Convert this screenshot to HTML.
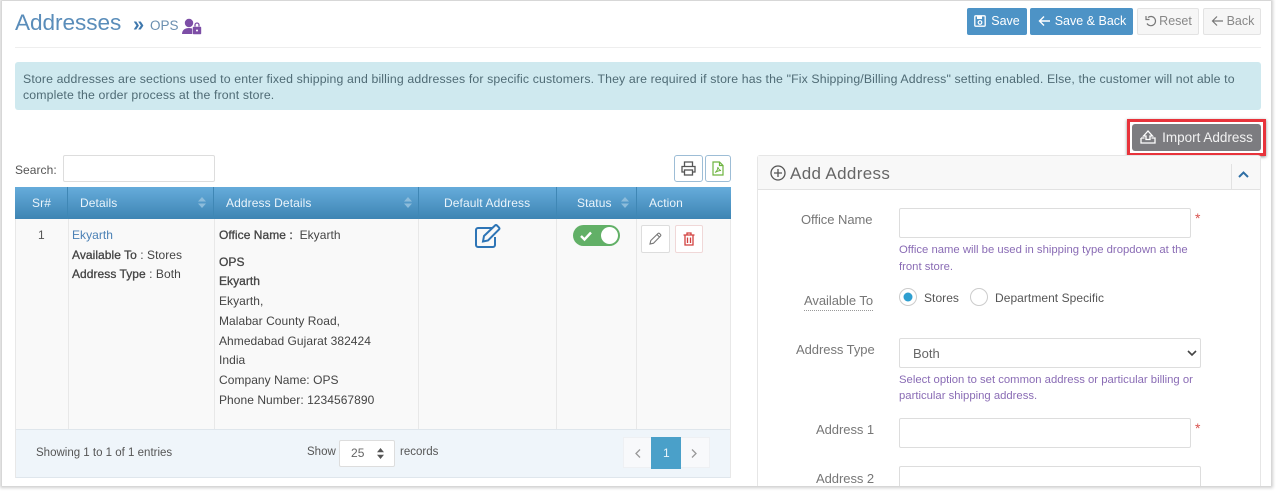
<!DOCTYPE html>
<html><head><meta charset="utf-8">
<style>
html,body{margin:0;padding:0;width:1280px;height:495px;overflow:hidden;background:#fff}
body{font-family:"Liberation Sans",sans-serif;font-size:12px;color:#555;position:relative;letter-spacing:.05px}
.a,.t{position:absolute}
.t{white-space:nowrap;line-height:16px}
.b{position:absolute;box-sizing:border-box;border-radius:2px;text-align:center;white-space:nowrap}
.in{position:absolute;box-sizing:border-box;background:#fff;border:1px solid #ddd;border-radius:2px}
.lab{position:absolute;white-space:nowrap;line-height:16px;color:#777;text-align:right;font-size:13px;letter-spacing:-.05px}
.help{position:absolute;white-space:nowrap;line-height:16px;color:#8a6cb5;font-size:11.3px;letter-spacing:0}
.v{position:absolute;top:219px;height:210px;width:1px;background:#e8e8e8}
.hv{position:absolute;top:187px;height:32px;width:1px;background:#3f87b5}
.h{position:absolute;top:195px;line-height:16px;color:#eaf4fb;white-space:nowrap;font-size:12px;letter-spacing:.1px}
svg{position:absolute;overflow:visible}
</style></head>
<body>
<div class="a" style="left:2px;top:1px;width:1269px;height:485px;background:#fff;box-shadow:0 0 3px 2px #cfcfcf"></div>

<div class="t" style="left:15px;top:7px;font-size:22.600px;line-height:32px;color:#5a8dba;letter-spacing:-.05px">Addresses</div>
<div class="t" style="left:133px;top:15px;font-size:20px;line-height:20px;color:#3f78ad;font-weight:bold;letter-spacing:0">»</div>
<div class="t" style="left:150px;top:17px;font-size:13.500px;line-height:18px;color:#6b8fb0;letter-spacing:0">OPS</div>
<svg style="left:182px;top:18px" width="20" height="17" viewBox="0 0 20 17"><circle cx="7" cy="5" r="4.200" fill="#7d4ea6"/><path d="M0 16c0-4 3-6 7-6 2 0 3 .4 4 1v5z" fill="#7d4ea6"/><rect x="10.500" y="8.500" width="9" height="8" rx="1" fill="#7d4ea6" stroke="#fff" stroke-width=".6"/><path d="M13 8.500V7a2 2 0 0 1 4 0v1.500" fill="none" stroke="#7d4ea6" stroke-width="1.300"/><circle cx="15" cy="12.500" r="1" fill="#fff"/></svg>
<div class="a" style="left:15px;top:47px;width:1246px;height:1px;background:#eee"></div>

<div class="b" style="left:967px;top:8px;width:60px;height:27px;background:#4d93c6;color:#fff;line-height:27px;padding-left:17px;font-size:12.500px;letter-spacing:0">Save</div>
<svg style="left:974px;top:15px" width="12" height="12" viewBox="0 0 12 12"><rect x=".8" y=".8" width="10.400" height="10.400" rx="1" fill="none" stroke="#fff" stroke-width="1.300"/><rect x="3" y="1" width="5" height="3" fill="#fff"/><circle cx="6" cy="7.500" r="1.800" fill="none" stroke="#fff" stroke-width="1.200"/></svg>
<div class="b" style="left:1030px;top:8px;width:103px;height:27px;background:#4d93c6;color:#fff;line-height:27px;padding-left:18px;font-size:12.500px;letter-spacing:0">Save &amp; Back</div>
<svg style="left:1038px;top:15px" width="13" height="12" viewBox="0 0 13 12"><path d="M12 6H1.500M6 1.500 1.500 6 6 10.500" fill="none" stroke="#fff" stroke-width="1.400"/></svg>
<div class="b" style="left:1137px;top:8px;width:62px;height:27px;background:#f6f6f6;border:1px solid #e3e3e3;color:#888;line-height:25px;padding-left:15px;font-size:12.500px;letter-spacing:0">Reset</div>
<svg style="left:1145px;top:15px" width="12" height="12" viewBox="0 0 12 12"><path d="M3 2.500A4.600 4.600 0 1 1 2 8.500" fill="none" stroke="#777" stroke-width="1.200"/><path d="M1 1v3.500h3.500" fill="none" stroke="#777" stroke-width="1.200"/></svg>
<div class="b" style="left:1203px;top:8px;width:58px;height:27px;background:#f6f6f6;border:1px solid #e3e3e3;color:#888;line-height:25px;padding-left:17px;font-size:12.500px;letter-spacing:0">Back</div>
<svg style="left:1211px;top:15px" width="13" height="12" viewBox="0 0 13 12"><path d="M12 6H1.500M6 1.500 1.500 6 6 10.500" fill="none" stroke="#777" stroke-width="1.200"/></svg>

<div class="a" style="left:15px;top:62px;width:1246px;height:48px;background:#cfe9ef;border-radius:3px"></div>
<div class="t" style="left:23px;top:71px;color:#4f6b75;font-size:12.300px;letter-spacing:.13px">Store addresses are sections used to enter fixed shipping and billing addresses for specific customers. They are required if store has the "Fix Shipping/Billing Address" setting enabled. Else, the customer will not able to</div>
<div class="t" style="left:23px;top:87px;color:#4f6b75;font-size:12.300px;letter-spacing:.13px">complete the order process at the front store.</div>

<div class="a" style="left:1127px;top:119px;width:139px;height:37px;box-sizing:border-box;border:3px solid #e8333b;box-shadow:0 1px 3px rgba(0,0,0,.45);background:#fff"></div>
<div class="b" style="left:1132px;top:124px;width:129px;height:27px;background:#7c7c80;border-radius:3px;color:#f2f2f2;line-height:27px;padding-left:22px;font-size:13.500px;letter-spacing:0">Import Address</div>
<svg style="left:1140px;top:130px" width="16" height="14" viewBox="0 0 16 14"><path d="M1 8v5h14V8h-3.500M4.500 8H1" fill="none" stroke="#fff" stroke-width="1.300"/><path d="M8 1 3.500 6H6v3.500h4V6h2.500z" fill="none" stroke="#fff" stroke-width="1.300"/></svg>

<div class="t" style="left:15px;top:162px">Search:</div>
<div class="in" style="left:63px;top:155px;width:152px;height:27px"></div>
<div class="in" style="left:674px;top:155px;width:29px;height:27px;border-color:#9dbdd6;border-radius:3px"></div>
<svg style="left:681px;top:161px" width="15" height="15" viewBox="0 0 15 15"><path d="M3.500 5V1h8v4M3.500 11H1V5.500h13V11h-2.500" fill="none" stroke="#555" stroke-width="1.300"/><rect x="3.500" y="9" width="8" height="5" fill="none" stroke="#555" stroke-width="1.300"/></svg>
<div class="in" style="left:705px;top:155px;width:26px;height:27px;border-color:#9dbdd6;border-radius:3px"></div>
<svg style="left:712px;top:161px" width="12" height="15" viewBox="0 0 12 15"><path d="M1 1h6.500L11 4.500V14H1zM7.500 1v3.500H11" fill="none" stroke="#6db33f" stroke-width="1.200"/><path d="M3 11.500c2-1 3-4 2.800-5.500.6 2 1.500 3 3.200 3.500-2 0-4 .8-6 2z" fill="none" stroke="#6db33f" stroke-width=".9"/></svg>

<!-- table -->
<div class="a" style="left:15px;top:187px;width:716px;height:32px;background:linear-gradient(#66acdb,#3d84b3)"></div>
<div class="a" style="left:15px;top:219px;width:716px;height:210px;background:#f9f9f9"></div>
<div class="a" style="left:15px;top:429px;width:716px;height:49px;background:#eff5fa;border-top:1px solid #dfe6ec;border-bottom:1px solid #dfe6ec;box-sizing:border-box"></div>
<div class="a" style="left:15px;top:219px;width:1px;height:259px;background:#e8e8e8"></div>
<div class="a" style="left:730px;top:219px;width:1px;height:259px;background:#e8e8e8"></div>
<div class="hv" style="left:67px"></div><div class="hv" style="left:213px"></div><div class="hv" style="left:418px"></div><div class="hv" style="left:556px"></div><div class="hv" style="left:636px"></div>
<div class="v" style="left:68px"></div><div class="v" style="left:214px"></div><div class="v" style="left:418px"></div><div class="v" style="left:556px"></div><div class="v" style="left:636px"></div>

<div class="h" style="left:32px">Sr#</div>
<div class="h" style="left:80px">Details</div>
<div class="h" style="left:226px">Address Details</div>
<div class="h" style="left:444px">Default Address</div>
<div class="h" style="left:577px">Status</div>
<div class="h" style="left:649px">Action</div>
<svg style="left:198px;top:197px" width="8" height="11" viewBox="0 0 8 11"><path d="M4 0 8 4.500H0zM4 11 0 6.500H8z" fill="#8dbcdb"/></svg>
<svg style="left:404px;top:197px" width="8" height="11" viewBox="0 0 8 11"><path d="M4 0 8 4.500H0zM4 11 0 6.500H8z" fill="#8dbcdb"/></svg>
<svg style="left:621px;top:197px" width="8" height="11" viewBox="0 0 8 11"><path d="M4 0 8 4.500H0zM4 11 0 6.500H8z" fill="#8dbcdb"/></svg>

<div class="t" style="left:38px;top:227px">1</div>
<div class="t" style="left:72px;top:227px;color:#4a80b5">Ekyarth</div>
<div class="t" style="left:72px;top:247px;color:#444"><span style="-webkit-text-stroke:.3px #444">Available To</span> : Stores</div>
<div class="t" style="left:72px;top:266px;color:#444"><span style="-webkit-text-stroke:.3px #444">Address Type</span> : Both</div>

<div class="t" style="left:219px;top:227px;color:#444"><span style="-webkit-text-stroke:.3px #444">Office Name :</span>&nbsp; Ekyarth</div>
<div class="t" style="left:219px;top:254px;color:#444;-webkit-text-stroke:.3px #444">OPS</div>
<div class="t" style="left:219px;top:273px;color:#444;-webkit-text-stroke:.3px #444">Ekyarth</div>
<div class="t" style="left:219px;top:293px;color:#444">Ekyarth,</div>
<div class="t" style="left:219px;top:313px;color:#444">Malabar County Road,</div>
<div class="t" style="left:219px;top:333px;color:#444">Ahmedabad Gujarat 382424</div>
<div class="t" style="left:219px;top:352px;color:#444">India</div>
<div class="t" style="left:219px;top:372px;color:#444">Company Name: OPS</div>
<div class="t" style="left:219px;top:392px;color:#444">Phone Number: 1234567890</div>

<svg style="left:475px;top:224px" width="26" height="24" viewBox="0 0 26 24"><path d="M17 4H3a2 2 0 0 0-2 2v15a2 2 0 0 0 2 2h15a2 2 0 0 0 2-2v-8" fill="none" stroke="#2e75b6" stroke-width="2"/><path d="M9 12 20 1.500a1.500 1.500 0 0 1 2 0l2 2a1.500 1.500 0 0 1 0 2L13 16.500l-5 1z" fill="none" stroke="#2e75b6" stroke-width="2"/></svg>

<div class="a" style="left:573px;top:225px;width:47px;height:21px;border-radius:11px;background:#62b067"></div>
<div class="a" style="left:601px;top:227px;width:17px;height:17px;border-radius:50%;background:#fff"></div>
<svg style="left:580px;top:231px" width="12" height="10" viewBox="0 0 12 10"><path d="M1 5l3.500 3.500L11 1.500" fill="none" stroke="#fff" stroke-width="2.400"/></svg>

<div class="a" style="left:641px;top:225px;width:29px;height:28px;box-sizing:border-box;background:#fff;border:1px solid #ddd;border-radius:2px"></div>
<svg style="left:649px;top:232px" width="13" height="13" viewBox="0 0 13 13"><path d="M1 12l.8-3.500L9 1.500a1 1 0 0 1 1.500 0l1 1a1 1 0 0 1 0 1.500L4.500 11.200zM8 2.500 10.500 5" fill="none" stroke="#777" stroke-width="1.100"/></svg>
<div class="a" style="left:675px;top:225px;width:28px;height:28px;box-sizing:border-box;background:#fff;border:1px solid #f0d8d8;border-radius:2px"></div>
<svg style="left:683px;top:232px" width="12" height="14" viewBox="0 0 12 14"><path d="M.5 3h11M4 3V1h4v2M2 3v10h8V3M4.500 5.500v5.500M7.500 5.500v5.500" fill="none" stroke="#d2403f" stroke-width="1.300"/></svg>

<div class="t" style="left:36px;top:445px;font-size:11.500px;letter-spacing:0">Showing 1 to 1 of 1 entries</div>
<div class="t" style="left:307px;top:444px;font-size:11.500px;letter-spacing:0">Show</div>
<div class="in" style="left:339px;top:440px;width:56px;height:27px"></div>
<div class="t" style="left:351px;top:445px;color:#666">25</div>
<svg style="left:377px;top:448px" width="7" height="11" viewBox="0 0 7 11"><path d="M3.500 0 7 4.200H0zM3.500 11 0 6.800H7z" fill="#555"/></svg>
<div class="t" style="left:400px;top:444px;font-size:11.500px;letter-spacing:0">records</div>
<div class="a" style="left:623px;top:437px;width:87px;height:31px;background:#f8f9fb;border:1px solid #eef0f3;box-sizing:border-box"></div>
<div class="a" style="left:651px;top:437px;width:30px;height:32px;background:#4aa0c9"></div>
<div class="t" style="left:663px;top:445px;color:#eaf5fa">1</div>
<svg style="left:635px;top:449px" width="6" height="9" viewBox="0 0 6 9"><path d="M5 .5 1 4.500 5 8.500" fill="none" stroke="#999" stroke-width="1.300"/></svg>
<svg style="left:691px;top:449px" width="6" height="9" viewBox="0 0 6 9"><path d="M1 .5 5 4.500 1 8.500" fill="none" stroke="#999" stroke-width="1.300"/></svg>

<!-- right panel -->
<div class="a" style="left:757px;top:155px;width:504px;height:331px;box-sizing:border-box;border:1px solid #e6e6e6;border-bottom:0;border-radius:3px 3px 0 0"></div>
<div class="a" style="left:758px;top:156px;width:502px;height:34px;background:#f8f8f8;border-bottom:1px solid #e2e2e2;box-sizing:border-box"></div>
<svg style="left:770px;top:165px" width="16" height="16" viewBox="0 0 16 16"><circle cx="8" cy="8" r="7" fill="none" stroke="#555" stroke-width="1.300"/><path d="M8 4v8M4 8h8" stroke="#555" stroke-width="1.300"/></svg>
<div class="t" style="left:790px;top:164px;font-size:17px;line-height:20px;color:#666;letter-spacing:.35px">Add Address</div>
<div class="a" style="left:1231px;top:164px;width:1px;height:25px;background:#e2e2e2"></div>
<svg style="left:1238px;top:171px" width="11" height="7" viewBox="0 0 11 7"><path d="M1 6 5.500 1.500 10 6" fill="none" stroke="#2f6fa5" stroke-width="2"/></svg>

<div class="lab" style="left:801px;top:212px">Office Name</div>
<div class="in" style="left:899px;top:208px;width:292px;height:30px"></div>
<div class="t" style="left:1195px;top:210px;color:#d9534f;font-size:14px">*</div>
<div class="help" style="left:899px;top:242px">Office name will be used in shipping type dropdown at the</div>
<div class="help" style="left:899px;top:259px">front store.</div>

<div class="lab" style="left:804px;top:293px">Available To</div>
<div class="a" style="left:804px;top:310px;width:69px;border-top:1px dotted #999"></div>
<div class="a" style="left:899px;top:288px;width:18px;height:18px;box-sizing:border-box;border:1px solid #ccc;border-radius:50%;background:#fff"></div>
<div class="a" style="left:904px;top:293px;width:8px;height:8px;border-radius:50%;background:#2f9fd0;box-shadow:0 0 0 .5px #2f9fd0"></div>
<div class="t" style="left:924px;top:290px">Stores</div>
<div class="a" style="left:970px;top:288px;width:18px;height:18px;box-sizing:border-box;border:1px solid #ccc;border-radius:50%;background:#fff"></div>
<div class="t" style="left:995px;top:290px">Department Specific</div>

<div class="lab" style="left:796px;top:342px">Address Type</div>
<div class="in" style="left:899px;top:338px;width:302px;height:30px"></div>
<div class="t" style="left:913px;top:346px;color:#666;font-size:13px;letter-spacing:0">Both</div>
<svg style="left:1187px;top:350px" width="10" height="7" viewBox="0 0 10 7"><path d="M1 1l4 4 4-4" fill="none" stroke="#444" stroke-width="1.600"/></svg>
<div class="help" style="left:899px;top:372px">Select option to set common address or particular billing or</div>
<div class="help" style="left:899px;top:388px">particular shipping address.</div>

<div class="lab" style="left:816px;top:422px">Address 1</div>
<div class="in" style="left:899px;top:418px;width:292px;height:30px"></div>
<div class="t" style="left:1195px;top:420px;color:#d9534f;font-size:14px">*</div>

<div class="lab" style="left:816px;top:471px">Address 2</div>
<div class="a" style="left:899px;top:466px;width:302px;height:20px;box-sizing:border-box;background:#fff;border:1px solid #ddd;border-bottom:0;border-radius:2px 2px 0 0"></div>
</body></html>
